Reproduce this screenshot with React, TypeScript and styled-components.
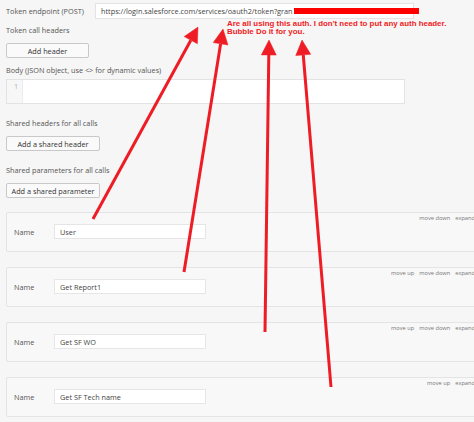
import React from "react";
import styled, { createGlobalStyle } from "styled-components";

const GlobalStyle = createGlobalStyle`
  html, body {
    margin: 0;
    padding: 0;
    background: #f6f6f6;
  }
`;

const Page = styled.div`
  position: relative;
  width: 474px;
  height: 422px;
  overflow: hidden;
  box-sizing: border-box;
  padding-left: 6px;
  background: #f6f6f6;
  font-family: "Open Sans", "DejaVu Sans", sans-serif;
  font-size: 7.3px;
  color: #555;
`;

const EndpointRow = styled.div`
  display: flex;
  align-items: center;
  margin-top: 3px;
  height: 16px;
`;

const EndpointLabel = styled.div`
  width: 89px;
  color: #555;
`;

const EndpointField = styled.div`
  position: relative;
  width: 319px;
  height: 16px;
  box-sizing: border-box;
  display: flex;
  align-items: center;
  padding-left: 5px;
  background: #fff;
  border: 1px solid #e3e3e3;
  color: #444;
  white-space: nowrap;
  overflow: visible;
`;

const Redacted = styled.span`
  display: inline-block;
  width: 125px;
  height: 6px;
  margin-left: 1px;
  background: #ff0000;
  flex-shrink: 0;
`;

const SectionLabel = styled.div<{ $top: number }>`
  margin-top: ${(p) => p.$top}px;
  height: 10px;
  line-height: 10px;
  color: #555;
`;

const ActionButton = styled.div<{ $width: number }>`
  margin-top: 8px;
  width: ${(p) => p.$width}px;
  height: 15px;
  box-sizing: border-box;
  display: flex;
  align-items: center;
  justify-content: center;
  background: #fafafa;
  border: 1px solid #c9c9c9;
  border-radius: 2px;
  color: #333;
`;

const Editor = styled.div`
  margin-top: 4px;
  width: 399px;
  height: 25px;
  box-sizing: border-box;
  display: flex;
  background: #fff;
  border: 1px solid #e3e3e3;
`;

const Gutter = styled.div`
  width: 16px;
  box-sizing: border-box;
  padding: 2px 4px 0 0;
  text-align: right;
  background: #f7f7f7;
  border-right: 1px solid #ececec;
  color: #aaa;
  font-size: 6.5px;
`;

const CallList = styled.div`
  margin-top: 14px;
  display: flex;
  flex-direction: column;
  gap: 15px;
`;

const CallCard = styled.div`
  height: 40px;
  margin-right: -12px;
  box-sizing: border-box;
  display: flex;
  flex-direction: column;
  background: #f8f8f8;
  border: 1px solid #e4e4e4;
  border-radius: 2px;
`;

const CardControls = styled.div`
  display: flex;
  justify-content: flex-end;
  gap: 5px;
  height: 11px;
  padding: 0 10px 0 0;
  font-size: 5.7px;
  line-height: 11px;
  color: #777;
  white-space: nowrap;
`;

const NameRow = styled.div`
  display: flex;
  align-items: center;
  padding-left: 7px;
`;

const NameLabel = styled.div`
  width: 40px;
  color: #555;
`;

const NameField = styled.div`
  width: 152px;
  height: 15px;
  box-sizing: border-box;
  display: flex;
  align-items: center;
  padding-left: 5px;
  background: #fff;
  border: 1px solid #e6e6e6;
  color: #444;
`;

const Annotation = styled.div`
  position: absolute;
  left: 227px;
  top: 20px;
  font-family: "Liberation Sans", Arial, sans-serif;
  font-weight: bold;
  font-size: 7.9px;
  line-height: 7.8px;
  color: #ee1c24;
  white-space: nowrap;
`;

const Overlay = styled.svg`
  position: absolute;
  left: 0;
  top: 0;
  pointer-events: none;
`;

type Arrow = { x1: number; y1: number; x2: number; y2: number };

const arrows: Arrow[] = [
  { x1: 93, y1: 219, x2: 198, y2: 27 },
  { x1: 184, y1: 272, x2: 223, y2: 29 },
  { x1: 265, y1: 332, x2: 269, y2: 40 },
  { x1: 331, y1: 387, x2: 302, y2: 40 },
];

const headPoints = (a: Arrow, len = 15, half = 7.5) => {
  const dx = a.x2 - a.x1;
  const dy = a.y2 - a.y1;
  const d = Math.hypot(dx, dy);
  const ux = dx / d;
  const uy = dy / d;
  const bx = a.x2 - ux * len;
  const by = a.y2 - uy * len;
  return {
    bx,
    by,
    points: `${a.x2},${a.y2} ${bx - uy * half},${by + ux * half} ${bx + uy * half},${by - ux * half}`,
  };
};

const calls = [
  { name: "User", controls: ["move down", "expand"] },
  { name: "Get Report1", controls: ["move up", "move down", "expand"] },
  { name: "Get SF WO", controls: ["move up", "move down", "expand"] },
  { name: "Get SF Tech name", controls: ["move up", "expand"] },
];

export default function App() {
  return (
    <>
      <GlobalStyle />
      <Page>
        <EndpointRow>
          <EndpointLabel>Token endpoint (POST)</EndpointLabel>
          <EndpointField>
            https://login.salesforce.com/services/oauth2/token?gran
            <Redacted />
          </EndpointField>
        </EndpointRow>

        <SectionLabel $top={6}>Token call headers</SectionLabel>
        <ActionButton $width={83}>Add header</ActionButton>

        <SectionLabel $top={7}>Body (JSON object, use &lt;&gt; for dynamic values)</SectionLabel>
        <Editor>
          <Gutter>1</Gutter>
        </Editor>

        <SectionLabel $top={14}>Shared headers for all calls</SectionLabel>
        <ActionButton $width={94}>Add a shared header</ActionButton>

        <SectionLabel $top={14}>Shared parameters for all calls</SectionLabel>
        <ActionButton $width={94}>Add a shared parameter</ActionButton>

        <CallList>
          {calls.map((c) => (
            <CallCard key={c.name}>
              <CardControls>
                {c.controls.map((ctl) => (
                  <span key={ctl}>{ctl}</span>
                ))}
              </CardControls>
              <NameRow>
                <NameLabel>Name</NameLabel>
                <NameField>{c.name}</NameField>
              </NameRow>
            </CallCard>
          ))}
        </CallList>

        <Annotation>
          Are all using this auth. I don't need to put any auth header.
          <br />
          Bubble Do it for you.
        </Annotation>

        <Overlay width={474} height={422} viewBox="0 0 474 422">
          {arrows.map((a, i) => {
            const h = headPoints(a);
            return (
              <g key={i} fill="#ee1c24" stroke="#ee1c24">
                <line x1={a.x1} y1={a.y1} x2={h.bx} y2={h.by} strokeWidth={3} />
                <polygon points={h.points} strokeWidth={0.5} />
              </g>
            );
          })}
        </Overlay>
      </Page>
    </>
  );
}
